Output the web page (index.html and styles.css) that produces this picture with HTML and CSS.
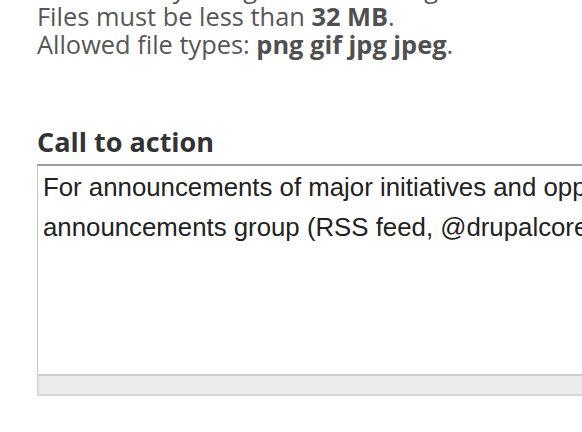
FILE: index.html
```html
<!DOCTYPE html>
<html>
<head>
<meta charset="utf-8">
<link rel="stylesheet" href="styles.css">
</head>
<body>
<div class="page">
  <div class="description">
    <div class="desc-line">One file only. Images must be larger than 100x100 pixels.</div>
    <div class="desc-line">Files must be less than <strong>32 MB</strong>.</div>
    <div class="desc-line">Allowed file types: <strong>png gif jpg jpeg</strong>.</div>
  </div>
  <div class="form-item">
    <label class="label">Call to action</label>
    <div class="textarea-wrap">
      <div class="textarea">For announcements of major initiatives and opportunities, join the Drupal Core<br>announcements group (RSS feed, @drupalcore on Twitter).</div>
      <div class="grippie"></div>
    </div>
  </div>
</div>
</body>
</html>
```
FILE: styles.css
```css
html, body {
  margin: 0;
  padding: 0;
  background: #fff;
  overflow: hidden;
}
.page {
  margin-top: -26px;
  padding-left: 37px;
  width: 1100px;
}
.description {
  font-family: "Open Sans", "DejaVu Sans", sans-serif;
  font-size: 25.4px;
  line-height: 28px;
  color: #575757;
}
.description strong {
  font-weight: 700;
  color: #505050;
}
.form-item {
  margin-top: 68px;
}
.label {
  display: block;
  font-family: "Open Sans", "DejaVu Sans", sans-serif;
  font-weight: 700;
  font-size: 27px;
  line-height: 32px;
  color: #333;
  margin-bottom: 6px;
}
.textarea-wrap {
  width: 1000px;
}
.textarea {
  box-sizing: border-box;
  height: 210px;
  border: 1px solid #c6c6c6;
  border-top: 2px solid #9a9a9a;
  border-bottom: none;
  padding: 1px 5px;
  font-family: "Liberation Sans", Arial, sans-serif;
  font-size: 25.8px;
  line-height: 40px;
  color: #222;
  white-space: nowrap;
  overflow: hidden;
}
.grippie {
  height: 18px;
  background: #ececec;
  border: 2px solid #d8d8d8;
  border-top-color: #cdcdcd;
}
```
